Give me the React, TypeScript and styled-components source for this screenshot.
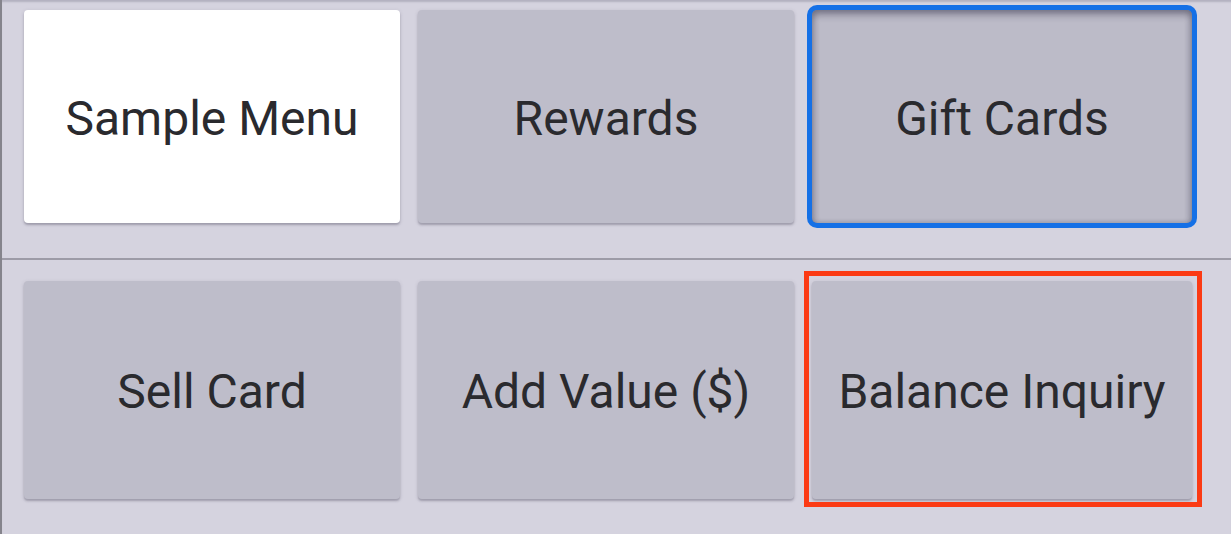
import React from "react";
import styled, { createGlobalStyle, css } from "styled-components";

const Global = createGlobalStyle`
  html, body { margin: 0; padding: 0; background: #d5d3df; }
  body { font-family: Roboto, "Liberation Sans", sans-serif; }
  * { box-sizing: border-box; }
`;

const Screen = styled.div`
  width: 1231px;
  height: 534px;
  background: #d5d3df;
  border-left: 2px solid #85848c;
  box-shadow: inset 0 3px 2px -1px rgba(90, 88, 110, 0.28);
  display: flex;
  flex-direction: column;
  overflow: hidden;
`;

const Row = styled.div<{ $top: number; $height: number }>`
  display: grid;
  grid-template-columns: 376px 376px 380px;
  column-gap: 18px;
  padding: ${(p) => p.$top}px 0 35px 22px;
  grid-template-rows: ${(p) => p.$height}px;
`;

const Divider = styled.div`
  height: 2px;
  background: #9d9ba7;
`;

type Variant = "white" | "gray" | "selected";

const Tile = styled.button<{ $variant: Variant }>`
  position: relative;
  border: none;
  border-radius: 4px;
  margin: 0;
  padding: 0;
  display: flex;
  align-items: center;
  justify-content: center;
  font-family: Roboto, "Liberation Sans", sans-serif;
  font-size: 48px;
  font-weight: 400;
  color: #2a2a2e;
  background: #bebdca;
  box-shadow: 0 2px 2px rgba(60, 58, 80, 0.28), 0 1px 4px rgba(60, 58, 80, 0.14);
  cursor: pointer;
  ${(p) =>
    p.$variant === "white" &&
    css`
      background: #ffffff;
    `}
  ${(p) =>
    p.$variant === "selected" &&
    css`
      background: #bcbbc8;
      border-radius: 5px;
      box-shadow: 0 0 0 5px #1570e6, inset 0 5px 7px rgba(40, 38, 60, 0.38),
        inset 3px 0 5px rgba(40, 38, 60, 0.15), inset -3px 0 5px rgba(40, 38, 60, 0.15);
    `}
`;

const Highlight = styled.span`
  position: absolute;
  top: -10px;
  left: -8px;
  right: -10px;
  bottom: -8px;
  border: 5px solid #fb3a14;
  pointer-events: none;
`;

const Label = styled.span`
  line-height: 1;
  padding-top: 4px;
`;

export default function App() {
  return (
    <>
      <Global />
      <Screen>
        <Row $top={10} $height={213}>
          <Tile $variant="white">
            <Label>Sample Menu</Label>
          </Tile>
          <Tile $variant="gray">
            <Label>Rewards</Label>
          </Tile>
          <Tile $variant="selected">
            <Label>Gift Cards</Label>
          </Tile>
        </Row>
        <Divider />
        <Row $top={21} $height={218}>
          <Tile $variant="gray">
            <Label>Sell Card</Label>
          </Tile>
          <Tile $variant="gray">
            <Label>Add Value ($)</Label>
          </Tile>
          <Tile $variant="gray">
            <Label>Balance Inquiry</Label>
            <Highlight />
          </Tile>
        </Row>
      </Screen>
    </>
  );
}
